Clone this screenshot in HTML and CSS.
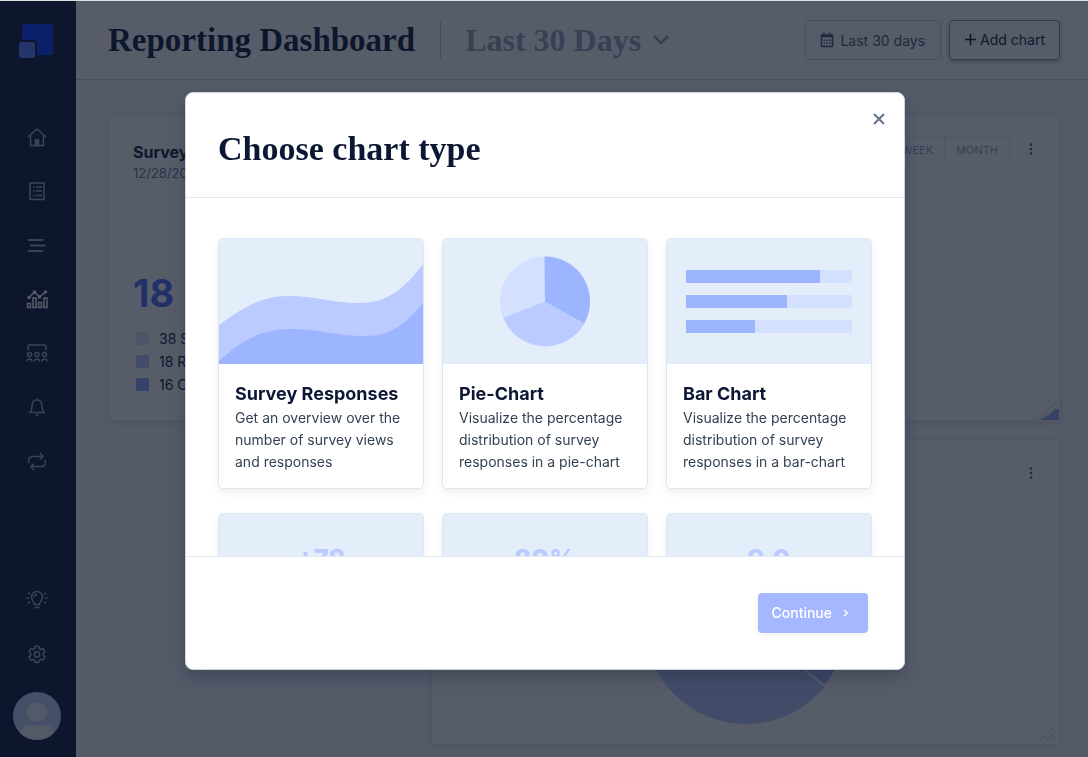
FILE: index.html
```html
<!DOCTYPE html>
<html lang="en">
<head>
    <meta charset="UTF-8">
    <meta name="viewport" content="width=device-width, initial-scale=1.0">
    <title>Reporting Dashboard</title>
    <link rel="stylesheet" href="styles.css">
</head>
<body>
    <div class="app">
        <nav class="sidebar" aria-label="Main">
            <a class="logo" href="#" aria-label="Start">
                <svg width="36" height="34" viewBox="0 0 36 34">
                    <path d="M5 0h27a2 2 0 0 1 2 2v27a2 2 0 0 1-2 2H18V19a3 3 0 0 0-3-3H3V2a2 2 0 0 1 2-2z" fill="#0537ff"/>
                    <rect x="0" y="18" width="16" height="16" rx="2" fill="#5a7dff"/>
                </svg>
            </a>
            <div class="nav-links">
                <a href="#" aria-label="Home">
                    <svg class="icon" viewBox="0 0 22 22"><path d="M2 11 11 3l9 8M4.500 9.500v10h13v-10"/><path d="M9.500 14h3v5.500h-3z" fill="currentColor"/></svg>
                </a>
                <a href="#" aria-label="Surveys">
                    <svg class="icon" viewBox="0 0 22 22"><path d="M4 3h14v16.500H4zM10 7h6M10 11h6M10 15.500h6M7 7h1.500M7 11h1.500M7 15.500h1.500"/></svg>
                </a>
                <a href="#" aria-label="Lists">
                    <svg class="icon icon-bold" viewBox="0 0 22 22"><path d="M2.500 6h14M5 11.500h14M2.500 17h14"/></svg>
                </a>
                <a href="#" class="active" aria-label="Reports">
                    <svg class="icon" viewBox="0 0 22 22"><path d="M1.500 15.500h3v4h-3zM7 10h3v9.500H7zM12.500 14.500h3v5h-3zM18 10h3v9.500h-3zM3 9.500l5.500-5.500 5 5L19.500 4"/><circle cx="3" cy="9.500" r="1"/><circle cx="8.500" cy="4" r="1"/><circle cx="13.500" cy="9" r="1"/><circle cx="19.500" cy="4" r="1"/></svg>
                </a>
                <a href="#" aria-label="Audience">
                    <svg class="icon" viewBox="0 0 22 22"><path d="M2 8.500V4.500a1.500 1.500 0 0 1 1.500-1.500h15A1.500 1.500 0 0 1 20 4.500v4M1 19.500c0-3.500 5-3.500 5 0M8.500 19.500c0-3.500 5-3.500 5 0M16 19.500c0-3.500 5-3.500 5 0"/><circle cx="3.500" cy="12.500" r="2"/><circle cx="11" cy="12.500" r="2"/><circle cx="18.500" cy="12.500" r="2"/></svg>
                </a>
                <a href="#" aria-label="Notifications">
                    <svg class="icon" viewBox="0 0 22 22"><path d="M4 16.500c2-2 2-3.500 2-6.500 0-4 2-6 5-6s5 2 5 6c0 3 0 4.500 2 6.500zM11 2.500V4M9.500 19h3"/></svg>
                </a>
                <a href="#" aria-label="Sync">
                    <svg class="icon" viewBox="0 0 22 22"><path d="M3 13C1.500 8.500 4 6.500 7 6.500h9.500M14 3l3 3.500-3 3M19 10c1.500 4.500-1 6.500-4 6.500H5.500M8 13.500l-3 3 3 3.500"/></svg>
                </a>
            </div>
            <div class="nav-links nav-bottom">
                <a href="#" aria-label="Tips">
                    <svg class="icon" viewBox="0 0 22 22"><path d="M8.500 15.500c0-3-3-4-3-7.500a5.500 5.500 0 0 1 11 0c0 3.500-3 4.500-3 7.500zM8.500 8A2.500 2.500 0 0 1 11 5.500M8.500 18.500h5M.5 9H3M19 9h2.500M2 4l2 1M20 4l-2 1M2 14l2-1M20 14l-2-1"/></svg>
                </a>
                <a href="#" aria-label="Settings">
                    <svg class="icon" viewBox="0 0 22 22"><path d="M9.300 3.200h3.400l.6 2.300 1.700 1 2.300-.7 1.700 3-1.700 1.600v2l1.700 1.600-1.700 3-2.300-.7-1.700 1-.6 2.200H9.300l-.6-2.200-1.700-1-2.300.7-1.700-3 1.700-1.600v-2L3 8.800l1.700-3 2.300.7 1.700-1z" stroke-linejoin="round"/><circle cx="11" cy="11.400" r="2.600"/></svg>
                </a>
            </div>
            <a class="avatar" href="#" aria-label="Profile">
                <svg width="48" height="48" viewBox="0 0 48 48">
                    <circle cx="24" cy="20" r="10"/>
                    <path d="M6 42c4-9 8-10 13-9 3 .8 7 .8 10 0 5-1 9 0 13 9l-6 6H12z"/>
                </svg>
            </a>
        </nav>

        <main class="main">
            <header class="topbar">
                <h1>Reporting Dashboard</h1>
                <button class="period">Last 30 Days
                    <svg width="18" height="12" viewBox="0 0 18 12"><path d="M2 2l7 7 7-7"/></svg>
                </button>
                <div class="actions">
                    <button class="btn">
                        <svg width="14" height="16" viewBox="0 0 14 16"><path d="M1.500 3h11v11.500h-11zM1.500 4.500h11M4 .5V3M10 .5V3" fill="none" stroke="currentColor" stroke-width="1.500"/><path d="M3.500 7.500H5V9H3.500zM6.250 7.500h1.500V9h-1.500zM9 7.500h1.500V9H9zM3.500 10.500H5V12H3.500zM6.250 10.500h1.500V12h-1.500zM9 10.500h1.500V12H9z" fill="currentColor"/></svg>
                        Last 30 days
                    </button>
                    <button class="btn btn-add">
                        <svg width="11" height="11" viewBox="0 0 11 11"><path d="M5.500 0v11M0 5.500h11" stroke="currentColor" stroke-width="1.600"/></svg>
                        Add chart
                    </button>
                </div>
            </header>

            <div class="widgets">
                <section class="widget widget-wide">
                    <div class="widget-head">
                        <div>
                            <h2>Survey Responses</h2>
                            <p class="date">12/28/2022</p>
                        </div>
                        <div class="widget-tools">
                            <div class="segments">
                                <button>DAY</button>
                                <button>WEEK</button>
                                <button>MONTH</button>
                            </div>
                            <button class="more" aria-label="More">
                                <svg width="4" height="12" viewBox="0 0 4 12"><circle cx="2" cy="1.500" r="1.300"/><circle cx="2" cy="6" r="1.300"/><circle cx="2" cy="10.500" r="1.300"/></svg>
                            </button>
                        </div>
                    </div>
                    <p class="total">18</p>
                    <ul class="legend">
                        <li class="views">38 Survey views</li>
                        <li class="responses">18 Responses</li>
                        <li class="completed">16 Completed</li>
                    </ul>
                    <svg class="corner" width="22" height="20" viewBox="0 0 22 20"><path d="M1 20C10 19 14 9 22 9v11z" fill="#8ea5f5"/><path d="M2 19 20 1M8 19 20 7" stroke="#c9d1de" fill="none"/></svg>
                </section>

                <section class="widget widget-pie">
                    <div class="widget-head">
                        <button class="more" aria-label="More">
                            <svg width="4" height="12" viewBox="0 0 4 12"><circle cx="2" cy="1.500" r="1.300"/><circle cx="2" cy="6" r="1.300"/><circle cx="2" cy="10.500" r="1.300"/></svg>
                        </button>
                    </div>
                    <svg class="pie" width="204" height="204" viewBox="0 0 204 204">
                        <circle cx="102" cy="102" r="102" fill="#b8caff"/>
                        <path d="M102 102V0a102 102 0 0 1 79 166z" fill="#a2b9ff" stroke="#fff" stroke-width="2"/>
                    </svg>
                    <svg class="corner" width="22" height="20" viewBox="0 0 22 20"><path d="M2 18 18 2M8 17 18 7M14 16l3-3" stroke="#c9d1de" fill="none"/></svg>
                </section>
            </div>
        </main>
    </div>

    <div class="overlay">
        <div class="modal" role="dialog" aria-modal="true" aria-labelledby="modal-title">
            <div class="modal-header">
                <h2 id="modal-title">Choose chart type</h2>
                <button class="close" aria-label="Close">
                    <svg width="12" height="12" viewBox="0 0 12 12"><path d="M1 1l10 10M11 1 1 11"/></svg>
                </button>
            </div>

            <div class="modal-body">
                <button class="chart-card">
                    <span class="preview">
                        <svg viewBox="0 0 204 125">
                            <path d="M0 86C22 70 42 57 68 57c30 0 44 7 73 7 27 0 44-14 63-39v100H0z" fill="#bbcaff"/>
                            <path d="M0 122c22-20 42-32 72-32 28 0 46 7 74 7 26 0 42-13 58-33v61H0z" fill="#9db4ff"/>
                        </svg>
                    </span>
                    <span class="card-text">
                        <strong>Survey Responses</strong>
                        <span>Get an overview over the number of survey views and responses</span>
                    </span>
                </button>
                <button class="chart-card">
                    <span class="preview">
                        <svg viewBox="0 0 204 125">
                            <circle cx="102" cy="62.500" r="45" fill="#d4e0ff"/>
                            <path d="M102 62.500 141.300 84.500A45 45 0 0 1 60.500 79z" fill="#bbcaff"/>
                            <path d="M102 62.500 101.500 17.500A45 45 0 0 1 141.300 84.500z" fill="#9db4ff"/>
                        </svg>
                    </span>
                    <span class="card-text">
                        <strong>Pie-Chart</strong>
                        <span>Visualize the percentage distribution of survey responses in a pie-chart</span>
                    </span>
                </button>
                <button class="chart-card">
                    <span class="preview">
                        <svg viewBox="0 0 204 125">
                            <path d="M19 31h166v13H19zM19 56h166v13H19zM19 81h166v13H19z" fill="#d4e0ff"/>
                            <path d="M19 31h134v13H19zM19 56h101v13H19zM19 81h69v13H19z" fill="#9db4ff"/>
                        </svg>
                    </span>
                    <span class="card-text">
                        <strong>Bar Chart</strong>
                        <span>Visualize the percentage distribution of survey responses in a bar-chart</span>
                    </span>
                </button>
                <button class="chart-card">
                    <span class="preview score">+78</span>
                    <span class="card-text"><strong>NPS</strong></span>
                </button>
                <button class="chart-card">
                    <span class="preview score">80%</span>
                    <span class="card-text"><strong>CSAT</strong></span>
                </button>
                <button class="chart-card">
                    <span class="preview score">9.0</span>
                    <span class="card-text"><strong>Average</strong></span>
                </button>
            </div>

            <div class="modal-footer">
                <button class="continue">Continue
                    <svg width="6" height="8" viewBox="0 0 6 8"><path d="M1 1l3.500 3L1 7"/></svg>
                </button>
            </div>
        </div>
    </div>
</body>
</html>
```
FILE: styles.css
```css
* {
    box-sizing: border-box;
}

body {
    margin: 0;
    border-top: 1px solid #d8e0e2;
    font-family: Inter, sans-serif;
    font-size: 14px;
    color: #0c1733;
    background: #f5f7fb;
    overflow: hidden;
}

h1, h2, p, ul {
    margin: 0;
    padding: 0;
}

button {
    font: inherit;
    color: inherit;
    background: none;
    border: none;
    padding: 0;
    cursor: pointer;
}

svg {
    display: block;
}

.app {
    display: flex;
    height: calc(100vh - 1px);
}

/* Sidebar */
.sidebar {
    width: 76px;
    flex: none;
    display: flex;
    flex-direction: column;
    align-items: center;
    padding: 23px 2px 17px 0;
    background: #0c1738;
}

.nav-links {
    display: flex;
    flex-direction: column;
    gap: 32px;
    margin-top: 68px;
}

.nav-links a {
    color: #a0acbf;
}

.nav-links a.active {
    color: #fff;
}

.nav-bottom {
    margin-top: auto;
}

.icon {
    width: 22px;
    height: 22px;
    fill: none;
    stroke: currentColor;
    stroke-width: 1.5;
}

.icon-bold {
    stroke-width: 2;
    stroke-linecap: round;
}

.avatar {
    margin-top: 27px;
    border-radius: 50%;
    overflow: hidden;
    background: #c3d4fb;
    fill: #f1f5f9;
}

/* Top bar */
.main {
    flex: 1;
    min-width: 0;
}

.topbar {
    display: flex;
    align-items: center;
    height: 79px;
    padding: 0 28px 0 32px;
    border-bottom: 1px solid #c6cfdb;
    background: #fff;
}

.topbar h1,
.period {
    font-family: "Liberation Serif", serif;
    font-size: 33px;
    font-weight: bold;
    line-height: 40px;
}

.period {
    display: flex;
    align-items: center;
    gap: 11px;
    margin-left: 25px;
    padding-left: 24px;
    border-left: 1px solid #c6cfdb;
    font-size: 32px;
    color: #94a3b8;
}

.period path {
    fill: none;
    stroke: #94a3b8;
    stroke-width: 2.5;
}

.actions {
    display: flex;
    gap: 8px;
    margin-left: auto;
}

.btn {
    display: flex;
    align-items: center;
    gap: 6px;
    height: 40px;
    padding: 0 15px 0 14px;
    border: 1px solid #cbd5e1;
    border-radius: 4px;
    color: #475569;
}

.btn-add {
    gap: 4px;
    padding: 0 14px 1px 15px;
    border-color: #7f8ea6;
    color: #0c1733;
    box-shadow: 0 2px 5px rgba(15, 23, 42, 0.3);
}

/* Dashboard widgets */
.widgets {
    display: grid;
    grid-template-columns: repeat(3, 1fr);
    grid-auto-rows: 306px;
    gap: 18px;
    padding: 35px 28px 12px 32px;
}

.widget {
    position: relative;
    padding: 20px 24px;
    border: 1px solid #eaeef4;
    border-radius: 6px;
    background: #fff;
    box-shadow: 0 2px 6px rgba(15, 23, 42, 0.1);
}

.widget-wide {
    grid-column: 1 / 4;
}

.widget-pie {
    grid-column: 2 / 4;
}

.widget-head {
    display: flex;
    justify-content: space-between;
}

.widget-head h2 {
    margin-top: 5px;
    font-size: 16px;
    line-height: 22px;
}

.date {
    font-size: 13px;
    line-height: 20px;
    color: #64748b;
}

.widget-tools {
    display: flex;
    align-items: flex-start;
    gap: 17px;
}

.segments {
    display: flex;
    border: 1px solid #e6ebf2;
    border-radius: 4px;
}

.segments button {
    height: 26px;
    padding: 0 11px;
    font-size: 11px;
    color: #94a3b8;
}

.segments button + button {
    border-left: 1px solid #e6ebf2;
}

.more {
    margin-left: auto;
    padding: 7px 2px;
    fill: #475569;
}

.total {
    margin-top: 87px;
    font-size: 38px;
    font-weight: bold;
    line-height: 46px;
    color: #4a6cff;
}

.legend {
    margin-top: 11px;
    list-style: none;
    line-height: 23px;
    padding-left: 3px;
}

.legend li {
    display: flex;
    align-items: center;
    gap: 10px;
}

.legend li::before {
    content: "";
    width: 13px;
    height: 13px;
    border-radius: 1px;
}

.legend .views::before {
    background: #dce6ff;
}

.legend .responses::before {
    background: #bac9ff;
}

.legend .completed::before {
    background: #92a7ff;
}

.corner {
    position: absolute;
    right: 0;
    bottom: 0;
}

.pie {
    margin: 34px auto 0;
}

/* Modal */
.overlay {
    position: fixed;
    inset: 1px 0 0;
    display: flex;
    align-items: center;
    justify-content: center;
    padding: 4px 0 0 2px;
    background: rgba(15, 23, 42, 0.7);
}

.modal {
    display: flex;
    flex-direction: column;
    width: 720px;
    max-width: 94%;
    border: 1px solid #cbd5e1;
    border-radius: 8px;
    background: #fff;
    box-shadow: 0 8px 16px rgba(15, 23, 42, 0.25);
    overflow: hidden;
}

.modal-header {
    display: flex;
    justify-content: space-between;
    align-items: flex-start;
    padding: 16px 16px 28px 32px;
    border-bottom: 1px solid #e2e8f0;
}

.modal-header h2 {
    margin-top: 20px;
    font-family: "Liberation Serif", serif;
    font-size: 34px;
    line-height: 40px;
}

.close {
    padding: 4px 3px;
}

.close path {
    stroke: #64748b;
    stroke-width: 2;
}

.modal-body {
    display: grid;
    grid-template-columns: repeat(3, 1fr);
    gap: 24px 18px;
    height: 358px;
    padding: 40px 32px;
    overflow-y: auto;
    scrollbar-width: none;
}

.chart-card {
    display: flex;
    flex-direction: column;
    min-height: 251px;
    border: 1px solid #dde6f1;
    border-radius: 5px;
    background: #fff;
    text-align: left;
    box-shadow: 0 4px 8px rgba(15, 23, 42, 0.06);
    overflow: hidden;
}

.preview {
    display: block;
    width: 100%;
    min-height: 125px;
    background: #e4eefb;
}

.score {
    padding-top: 27px;
    font-size: 26px;
    font-weight: 800;
    line-height: 36px;
    text-align: center;
    color: #bbcaff;
}

.card-text {
    display: flex;
    flex-direction: column;
    padding: 17px 16px;
    line-height: 22px;
    color: #334155;
}

.card-text strong {
    font-size: 18px;
    line-height: 26px;
    color: #0c1733;
}

.modal-footer {
    display: flex;
    justify-content: flex-end;
    padding: 36px;
    border-top: 1px solid #e2e8f0;
}

.continue {
    display: flex;
    align-items: center;
    gap: 11px;
    height: 40px;
    padding: 0 19px 1px 13px;
    border-radius: 4px;
    background: #a5b8ff;
    color: #fff;
    font-weight: 500;
    box-shadow: 0 2px 6px rgba(15, 23, 42, 0.06);
}

.continue path {
    fill: none;
    stroke: #fff;
    stroke-width: 1.2;
}
```
